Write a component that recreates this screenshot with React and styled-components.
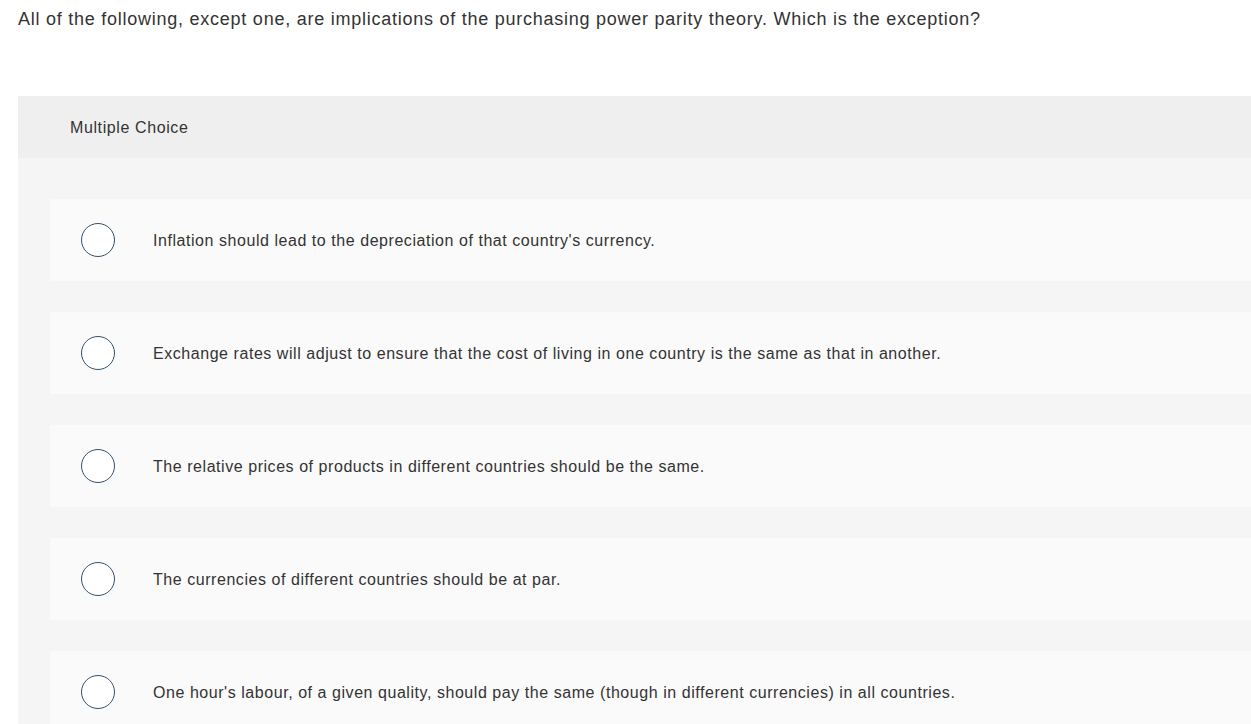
import React from 'react';
import styled, { createGlobalStyle } from 'styled-components';

const GlobalStyle = createGlobalStyle`
  html, body {
    margin: 0;
    padding: 0;
    background: #fff;
    overflow: hidden;
  }
  body {
    font-family: "Liberation Sans", Arial, sans-serif;
    color: #333;
  }
`;

const Page = styled.div`
  padding: 8px 0 0 18px;
`;

const Question = styled.p`
  margin: 0;
  font-size: 18px;
  line-height: 22px;
  color: #333;
  letter-spacing: 0.75px;
  white-space: nowrap;
`;

const Panel = styled.div`
  margin-top: 66px;
  background: #f5f5f5;
`;

const PanelHeader = styled.div`
  height: 62px;
  display: flex;
  align-items: center;
  padding: 2px 0 0 52px;
  box-sizing: border-box;
  background: #efefef;
  font-size: 16px;
  letter-spacing: 0.6px;
  color: #333;
`;

const Options = styled.div`
  display: flex;
  flex-direction: column;
  gap: 31px;
  padding: 41px 0 0 32px;
`;

const Option = styled.label`
  height: 82px;
  display: flex;
  align-items: center;
  background: #fafafa;
  cursor: pointer;
`;

const Radio = styled.span`
  width: 32px;
  height: 32px;
  margin-left: 31px;
  border: 1.5px solid #34506b;
  border-radius: 50%;
  background: #fff;
  flex-shrink: 0;
`;

const OptionText = styled.span`
  margin-left: 38px;
  padding-top: 2px;
  font-size: 16px;
  letter-spacing: 0.55px;
  color: #333;
  white-space: nowrap;
`;

const choices = [
  "Inflation should lead to the depreciation of that country's currency.",
  'Exchange rates will adjust to ensure that the cost of living in one country is the same as that in another.',
  'The relative prices of products in different countries should be the same.',
  'The currencies of different countries should be at par.',
  "One hour's labour, of a given quality, should pay the same (though in different currencies) in all countries.",
];

const App = () => {
  return (
    <Page>
      <GlobalStyle />
      <Question>
        All of the following, except one, are implications of the purchasing power parity theory. Which is the exception?
      </Question>
      <Panel>
        <PanelHeader>Multiple Choice</PanelHeader>
        <Options>
          {choices.map((c) => (
            <Option key={c}>
              <Radio />
              <OptionText>{c}</OptionText>
            </Option>
          ))}
        </Options>
      </Panel>
    </Page>
  );
};

export default App;
